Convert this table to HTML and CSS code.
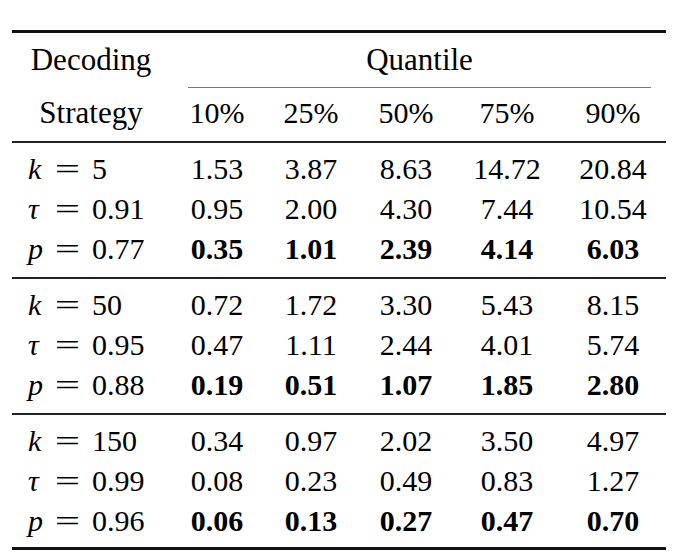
FILE: index.html
```html
<!DOCTYPE html>
<html lang="en">
<head>
<meta charset="utf-8">
<title>Quantile table</title>
<link rel="stylesheet" href="styles.css">
</head>
<body>
<div class="table">
  <div class="head">
    <div class="row hrow1">
      <div class="hcell">Decoding</div>
      <div class="span5"><div class="cmid">Quantile</div></div>
    </div>
    <div class="row hrow2">
      <div class="hcell">Strategy</div>
      <div class="num">10%</div>
      <div class="num">25%</div>
      <div class="num">50%</div>
      <div class="num">75%</div>
      <div class="num">90%</div>
    </div>
  </div>

  <div class="group">
    <div class="row">
      <div class="stub"><span class="var">k</span><span class="eq">=</span>5</div>
      <div class="num">1.53</div><div class="num">3.87</div><div class="num">8.63</div><div class="num">14.72</div><div class="num">20.84</div>
    </div>
    <div class="row">
      <div class="stub"><span class="var">τ</span><span class="eq">=</span>0.91</div>
      <div class="num">0.95</div><div class="num">2.00</div><div class="num">4.30</div><div class="num">7.44</div><div class="num">10.54</div>
    </div>
    <div class="row best">
      <div class="stub"><span class="var">p</span><span class="eq">=</span>0.77</div>
      <div class="num">0.35</div><div class="num">1.01</div><div class="num">2.39</div><div class="num">4.14</div><div class="num">6.03</div>
    </div>
  </div>

  <div class="group">
    <div class="row">
      <div class="stub"><span class="var">k</span><span class="eq">=</span>50</div>
      <div class="num">0.72</div><div class="num">1.72</div><div class="num">3.30</div><div class="num">5.43</div><div class="num">8.15</div>
    </div>
    <div class="row">
      <div class="stub"><span class="var">τ</span><span class="eq">=</span>0.95</div>
      <div class="num">0.47</div><div class="num">1.11</div><div class="num">2.44</div><div class="num">4.01</div><div class="num">5.74</div>
    </div>
    <div class="row best">
      <div class="stub"><span class="var">p</span><span class="eq">=</span>0.88</div>
      <div class="num">0.19</div><div class="num">0.51</div><div class="num">1.07</div><div class="num">1.85</div><div class="num">2.80</div>
    </div>
  </div>

  <div class="group last">
    <div class="row">
      <div class="stub"><span class="var">k</span><span class="eq">=</span>150</div>
      <div class="num">0.34</div><div class="num">0.97</div><div class="num">2.02</div><div class="num">3.50</div><div class="num">4.97</div>
    </div>
    <div class="row">
      <div class="stub"><span class="var">τ</span><span class="eq">=</span>0.99</div>
      <div class="num">0.08</div><div class="num">0.23</div><div class="num">0.49</div><div class="num">0.83</div><div class="num">1.27</div>
    </div>
    <div class="row best">
      <div class="stub"><span class="var">p</span><span class="eq">=</span>0.96</div>
      <div class="num">0.06</div><div class="num">0.13</div><div class="num">0.27</div><div class="num">0.47</div><div class="num">0.70</div>
    </div>
  </div>
</div>
</body>
</html>
```

FILE: styles.css
```css
html, body {
  margin: 0;
  padding: 0;
  background: #ffffff;
}

body {
  font-family: "Liberation Serif", "Times New Roman", serif;
  color: #000000;
}

.table {
  margin: 30px 0 0 12px;
  width: 654px;
  border-top: 3px solid #111111;
  border-bottom: 3px solid #111111;
}

.row {
  display: grid;
  grid-template-columns: 158px 94px 94px 96px 106px 106px;
  font-size: 30px;
  line-height: 40px;
  height: 40px;
  white-space: nowrap;
}

.head {
  border-bottom: 2px solid #222222;
}

.hrow1 {
  height: auto;
  padding-top: 7px;
}

.hrow2 {
  padding: 5px 0 8px;
}

.hcell {
  font-size: 31px;
  text-align: center;
}

.span5 {
  grid-column: 2 / 7;
  font-size: 31px;
  padding: 0 15px 0 18px;
}

.cmid {
  text-align: center;
  padding-bottom: 7px;
  border-bottom: 1px solid #777777;
}

.num {
  text-align: center;
}

.best .num {
  font-weight: bold;
}

.group {
  padding: 6px 0 8px;
}

.group + .group {
  border-top: 2px solid #222222;
}

.group.last {
  padding-bottom: 6px;
}

.stub {
  padding-left: 16px;
}

.var {
  display: inline-block;
  width: 15px;
  font-style: italic;
}

.eq {
  display: inline-block;
  width: 17px;
  margin: 0 16px 0 16px;
  text-align: center;
  transform: scaleX(1.5);
}
```
